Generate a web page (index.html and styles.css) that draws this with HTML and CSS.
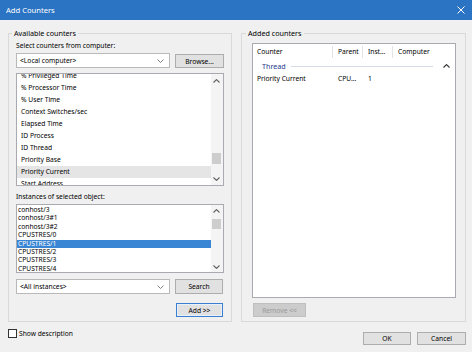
FILE: index.html
```html
<!DOCTYPE html>
<html>
<head>
  <title>Add Counters</title>
  <link rel="stylesheet" href="styles.css">
</head>
<body>
  <div class="window">
    <div class="titlebar">
      <span class="title">Add Counters</span>
      <svg class="close" width="8" height="8" viewBox="0 0 8 8"><path d="M0.5 0.5 L7.5 7.5 M7.5 0.5 L0.5 7.5" stroke="#fff" stroke-width="1"/></svg>
    </div>

    <div class="content">
      <div class="groups">
        <!-- left: available counters -->
        <fieldset class="group group-left">
          <legend class="legend-left">Available counters</legend>
          <div class="field-label">Select counters from computer:</div>
          <div class="row">
            <div class="combo combo-first">
              <span>&lt;Local computer&gt;</span>
              <svg width="7" height="4" viewBox="0 0 7 4"><path d="M0.5 0.5 L3.5 3.5 L6.5 0.5" fill="none" stroke="#707070" stroke-width="0.9"/></svg>
            </div>
            <button class="btn btn-browse">Browse...</button>
          </div>

          <div class="listbox counters">
            <div class="items counter-items">
              <div class="item">% Privileged Time</div>
              <div class="item">% Processor Time</div>
              <div class="item">% User Time</div>
              <div class="item">Context Switches/sec</div>
              <div class="item">Elapsed Time</div>
              <div class="item">ID Process</div>
              <div class="item">ID Thread</div>
              <div class="item">Priority Base</div>
              <div class="item inactive-sel">Priority Current</div>
              <div class="item">Start Address</div>
            </div>
            <div class="scrollbar">
              <div class="arrow arrow-counters-up">
                <svg width="7" height="4" viewBox="0 0 7 4"><path d="M0.5 3.5 L3.5 0.6 L6.5 3.5" fill="none" stroke="#606060" stroke-width="1.1"/></svg>
              </div>
              <div class="track"><div class="thumb thumb-counters"></div></div>
              <div class="arrow arrow-counters-down">
                <svg width="7" height="4" viewBox="0 0 7 4"><path d="M0.5 0.5 L3.5 3.4 L6.5 0.5" fill="none" stroke="#606060" stroke-width="1.1"/></svg>
              </div>
            </div>
          </div>

          <div class="field-label label-instances">Instances of selected object:</div>
          <div class="listbox instances">
            <div class="items instance-items">
              <div class="item small">conhost/3</div>
              <div class="item small">conhost/3#1</div>
              <div class="item small">conhost/3#2</div>
              <div class="item small">CPUSTRES/0</div>
              <div class="item small selected">CPUSTRES/1</div>
              <div class="item small">CPUSTRES/2</div>
              <div class="item small">CPUSTRES/3</div>
              <div class="item small">CPUSTRES/4</div>
            </div>
            <div class="scrollbar">
              <div class="arrow arrow-inst-up">
                <svg width="7" height="4" viewBox="0 0 7 4"><path d="M0.5 3.5 L3.5 0.6 L6.5 3.5" fill="none" stroke="#606060" stroke-width="1.1"/></svg>
              </div>
              <div class="track"><div class="thumb thumb-inst"></div></div>
              <div class="arrow arrow-inst-down">
                <svg width="7" height="4" viewBox="0 0 7 4"><path d="M0.5 0.5 L3.5 3.4 L6.5 0.5" fill="none" stroke="#606060" stroke-width="1.1"/></svg>
              </div>
            </div>
          </div>

          <div class="row row-search">
            <div class="combo">
              <span>&lt;All instances&gt;</span>
              <svg width="7" height="4" viewBox="0 0 7 4"><path d="M0.5 0.5 L3.5 3.5 L6.5 0.5" fill="none" stroke="#707070" stroke-width="0.9"/></svg>
            </div>
            <button class="btn btn-search">Search</button>
          </div>

          <button class="btn btn-add">Add &gt;&gt;</button>
        </fieldset>

        <!-- right: added counters -->
        <fieldset class="group group-right">
          <legend class="legend-right">Added counters</legend>
          <div class="listview">
            <div class="lv-header">
              <div class="lv-cell col-counter sep">Counter</div>
              <div class="lv-cell col-parent sep">Parent</div>
              <div class="lv-cell col-inst sep">Inst...</div>
              <div class="lv-cell col-computer">Computer</div>
            </div>
            <div class="lv-group">
              <span class="lv-group-name">Thread</span>
              <span class="lv-group-line"></span>
              <svg width="7" height="4" viewBox="0 0 7 4"><path d="M0.5 3.5 L3.5 0.6 L6.5 3.5" fill="none" stroke="#333" stroke-width="1.1"/></svg>
            </div>
            <div class="lv-row">
              <div class="lv-cell col-counter">Priority Current</div>
              <div class="lv-cell col-parent">CPU...</div>
              <div class="lv-cell col-inst">1</div>
              <div class="lv-cell col-computer"></div>
            </div>
          </div>
          <button class="btn btn-remove" disabled>Remove &lt;&lt;</button>
        </fieldset>
      </div>

      <div class="footer">
        <label class="check">
          <span class="check-box"></span>
          <span>Show description</span>
        </label>
        <div class="dialog-buttons">
          <button class="btn btn-ok">OK</button>
          <button class="btn btn-cancel">Cancel</button>
        </div>
      </div>
    </div>
  </div>
</body>
</html>
```

FILE: styles.css
```css
* {
  box-sizing: border-box;
}

body {
  margin: 0;
  background-color: #fff;
  font-family: "Noto Sans", "Open Sans", sans-serif;
  font-size: 6.7px;
  color: #000;
}

.window {
  width: 472px;
  height: 352px;
  background-color: #f0f0f0;
  display: flex;
  flex-direction: column;
}

.titlebar {
  height: 20px;
  background-color: #2b74c3;
  color: white;
  display: flex;
  align-items: center;
  justify-content: space-between;
  padding: 0 7px 0 6px;
  font-size: 7.6px;
}

.content {
  padding: 8px 6px 0 8px;
}

.groups {
  display: flex;
  gap: 9px;
}

.group {
  margin: 0;
  border: 1px solid #d9d9d9;
  display: flex;
  flex-direction: column;
  min-width: 0;
}

.group-left {
  width: 224px;
  padding: 0 7px 4px 7px;
}

.group-right {
  width: 225px;
  padding: 0 9px 4px 10px;
}

legend {
  line-height: 10px;
  padding: 0 2px;
  font-size: 7.2px;
}

.legend-left {
  margin-left: -4px;
}

.legend-right {
  margin-left: -6px;
}

.field-label {
  line-height: 10px;
  margin-top: 3px;
}

.label-instances {
  margin-top: 6px;
}

.row {
  display: flex;
  gap: 5px;
  margin-top: 2px;
}

.row-search {
  margin-top: 6px;
}

.combo {
  width: 154px;
  height: 15px;
  background-color: white;
  border: 1px solid #b9b9b9;
  display: flex;
  align-items: center;
  justify-content: space-between;
  padding: 0 5px 0 3px;
}

.btn {
  font: inherit;
  color: #000;
  background-color: #e1e1e1;
  border: 1px solid #adadad;
  padding: 0;
  height: 14px;
  display: flex;
  align-items: center;
  justify-content: center;
}

.btn-browse {
  width: 49px;
  height: 14px;
  margin-top: 1px;
}

.btn-search {
  width: 48px;
  height: 15px;
}

.btn-add {
  width: 47px;
  margin-top: 9px;
  align-self: flex-end;
  margin-right: 1px;
  border-color: #3b7fd1;
  box-shadow: inset 0 0 0 1px #e8f0fa;
}

.listbox {
  background-color: white;
  border: 1px solid #a9abb1;
  display: flex;
  overflow: hidden;
}

.counters {
  height: 113px;
  margin-top: 5px;
}

.instances {
  height: 69px;
  margin-top: 2px;
}

.items {
  flex: 1;
  min-width: 0;
}

.counter-items {
  margin-top: -4px;
}

.instance-items {
  padding-top: 1px;
}

.item {
  height: 12px;
  line-height: 12px;
  padding-left: 4px;
  white-space: nowrap;
}

.item.small {
  height: 8.4px;
  line-height: 8.4px;
  padding-left: 1px;
}

.inactive-sel {
  background-color: #e5e5e5;
}

.selected {
  background-color: #3b86d4;
  color: white;
}

.scrollbar {
  width: 12px;
  background-color: #f4f4f4;
  display: flex;
  flex-direction: column;
}

.arrow {
  display: flex;
  align-items: center;
  justify-content: center;
  padding-right: 1px;
}

.arrow-counters-up { height: 14px; }
.arrow-counters-down { height: 13px; }
.arrow-inst-up { height: 12px; }
.arrow-inst-down { height: 11px; }

.track {
  flex: 1;
  padding: 0 2px 0 1px;
}

.thumb {
  background-color: #cdcdcd;
}

.thumb-counters {
  margin-top: 65px;
  height: 11px;
}

.thumb-inst {
  margin-top: 2px;
  height: 10px;
}

.listview {
  background-color: white;
  border: 1px solid #a9abb1;
  height: 255px;
  margin-top: 5px;
}

.lv-header {
  display: flex;
  align-items: center;
  height: 16px;
}

.lv-row {
  display: flex;
  align-items: center;
  height: 13px;
}

.lv-cell {
  height: 12px;
  line-height: 12px;
  padding-left: 5px;
  white-space: nowrap;
  overflow: hidden;
}

.sep {
  border-right: 1px solid #e3e3e3;
}

.col-counter {
  width: 80px;
  padding-left: 4px;
}

.col-parent,
.col-inst {
  width: 30px;
}

.col-computer {
  flex: 1;
}

.lv-group {
  display: flex;
  align-items: center;
  height: 12px;
  padding: 0 5px 0 9px;
  color: #26398c;
  font-size: 7.2px;
}

.lv-group-line {
  flex: 1;
  height: 1px;
  background-color: #d4dbe6;
  margin: 0 10px 0 5px;
}

.btn-remove {
  width: 53px;
  margin-top: 5px;
  margin-left: 1px;
  background-color: #cccccc;
  border-color: #bfbfbf;
  color: #9a9a9a;
}

.footer {
  display: flex;
  justify-content: space-between;
  align-items: flex-start;
}

.check {
  display: flex;
  align-items: center;
  gap: 2px;
  margin-top: 7px;
}

.check-box {
  width: 9px;
  height: 9px;
  background-color: white;
  border: 1px solid #333;
}

.dialog-buttons {
  display: flex;
  gap: 6px;
  margin-top: 10px;
}

.btn-ok {
  width: 48px;
  height: 13px;
}

.btn-cancel {
  width: 49px;
  height: 13px;
}
```
